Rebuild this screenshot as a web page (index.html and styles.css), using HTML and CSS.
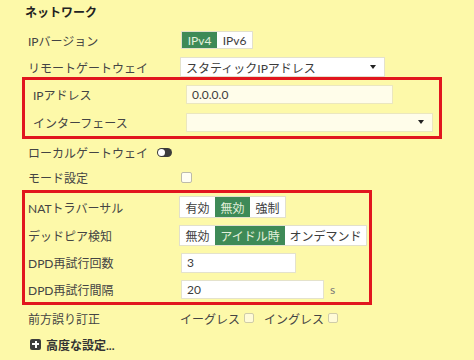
FILE: index.html
```html
<!DOCTYPE html>
<html lang="ja">
<head>
<meta charset="utf-8">
<link rel="stylesheet" href="styles.css">
</head>
<body>
<div class="panel">
  <div class="title">ネットワーク</div>

  <div class="row r28">
    <div class="label">IPバージョン</div>
    <div class="seg seg-ip"><span class="btn on">IPv4</span><span class="btn">IPv6</span></div>
  </div>

  <div class="row r-remote">
    <div class="label">リモートゲートウェイ</div>
    <div class="select sel-remote"><span>スタティックIPアドレス</span><i class="caret"></i></div>
  </div>

  <div class="box box1">
    <div class="row r28">
      <div class="label">IPアドレス</div>
      <div class="input cream in-ip">0.0.0.0</div>
    </div>
    <div class="row r28">
      <div class="label">インターフェース</div>
      <div class="select cream sel-iface"><span></span><i class="caret"></i></div>
    </div>
  </div>

  <div class="row r26">
    <span class="label-inline">ローカルゲートウェイ</span>
    <span class="switch"><span class="knob"></span></span>
  </div>

  <div class="row r25">
    <div class="label">モード設定</div>
    <span class="check"></span>
  </div>

  <div class="box box2">
    <div class="row r28">
      <div class="label">NATトラバーサル</div>
      <div class="seg seg-nat"><span class="btn">有効</span><span class="btn on">無効</span><span class="btn">強制</span></div>
    </div>
    <div class="row r28">
      <div class="label">デッドピア検知</div>
      <div class="seg seg-dpd"><span class="btn">無効</span><span class="btn on w70">アイドル時</span><span class="btn w81">オンデマンド</span></div>
    </div>
    <div class="row r27">
      <div class="label">DPD再試行回数</div>
      <div class="input in-count">3</div>
    </div>
    <div class="row r26">
      <div class="label">DPD再試行間隔</div>
      <div class="input in-interval">20</div>
      <span class="unit">s</span>
    </div>
  </div>

  <div class="row r26">
    <div class="label">前方誤り訂正</div>
    <span class="opt">イーグレス</span><span class="check small cream-check"></span>
    <span class="opt opt2">イングレス</span><span class="check small cream-check"></span>
  </div>

  <div class="row r26 adv">
    <span class="plus"></span><span class="adv-text">高度な設定...</span>
  </div>
</div>
</body>
</html>
```

FILE: styles.css
```css
* { box-sizing: border-box; }
html, body {
  margin: 0;
  padding: 0;
  background: #fdf9a9;
}
body {
  width: 474px;
  height: 360px;
  overflow: hidden;
  font-family: "Lato", "Noto Sans CJK JP", sans-serif;
  font-size: 12px;
  color: #444;
}
.panel {
  padding-left: 22px;
  display: flex;
  flex-direction: column;
}
.title {
  height: 26px;
  line-height: 26px;
  padding-left: 3px;
  font-weight: bold;
  color: #222;
}
.row {
  display: flex;
  align-items: center;
  padding-left: 6px;
}
.r28 { height: 28px; }
.r27 { height: 27px; }
.r26 { height: 26px; }
.r25 { height: 25px; }
.r-remote { height: 20px; margin-top: 3px; }
.label {
  width: 152px;
  flex: none;
  white-space: nowrap;
}

/* segmented buttons */
.seg {
  display: flex;
  border: 1px solid #e2e0cc;
  background: #fff;
}
.seg-ip { height: 18px; margin-left: 1px; }
.seg-nat { height: 22px; }
.seg-dpd { height: 21px; }
.btn {
  width: 35px;
  display: flex;
  align-items: center;
  justify-content: center;
  color: #3c3c3c;
  white-space: nowrap;
}
.btn.on {
  background: #3e8a57;
  color: #e4f1dc;
}
.w70 { width: 70px; }
.w81 { width: 81px; }

/* select / input */
.select, .input {
  display: flex;
  align-items: center;
  background: #fff;
  border: 1px solid #e4e2cc;
  padding: 0 6px 0 5px;
  color: #3c3c3c;
}
.select { justify-content: space-between; }
.cream { background: #fffdea; border-color: #ebe7bf; }
.sel-remote { width: 205px; height: 20px; }
.caret {
  width: 0;
  height: 0;
  border-left: 3.5px solid transparent;
  border-right: 3.5px solid transparent;
  border-top: 4px solid #222;
  margin-right: 2px;
}

/* box with red outline */
.box {
  border: 3px solid #e1161e;
}
.box1 { width: 420px; }
.box1 .row { padding-left: 8px; }
.box1 .label { width: 153px; }
.in-ip { width: 207px; height: 19px; }
.sel-iface { width: 247px; height: 19px; }

.box2 { width: 350px; }
.box2 .row { padding-left: 3px; }
.box2 .label { width: 151px; }
.in-count { width: 115px; height: 20px; margin-left: 2px; }
.in-interval { width: 143px; height: 19px; margin-left: 2px; }
.unit { margin-left: 6px; color: #777; font-size: 12px; }

/* toggle switch */
.label-inline { white-space: nowrap; }
.switch {
  margin-left: 9px;
  width: 15px;
  height: 9px;
  border-radius: 5px;
  background: #3b3b3b;
  position: relative;
}
.knob {
  position: absolute;
  left: 1px;
  top: 1px;
  width: 7px;
  height: 7px;
  border-radius: 50%;
  background: #fff;
}

/* checkboxes */
.check {
  width: 11px;
  height: 11px;
  border: 1px solid #bdbbaa;
  border-radius: 2px;
  background: #fffef2;
  margin-left: 1px;
}
.check.small { width: 10px; height: 10px; margin-left: 4px; }
.cream-check { background: #fffbd8; border-color: #cfcca8; }
.opt { white-space: nowrap; }
.opt2 { margin-left: 10px; }

/* advanced */
.adv { padding-left: 8px; }
.plus {
  width: 11px;
  height: 11px;
  border-radius: 2px;
  background: #3d3d3d;
  position: relative;
}
.plus::before, .plus::after {
  content: "";
  position: absolute;
  background: #fff;
}
.plus::before { left: 2px; right: 2px; top: 4.5px; height: 2px; }
.plus::after { top: 2px; bottom: 2px; left: 4.5px; width: 2px; }
.adv-text { margin-left: 5px; font-weight: bold; color: #333; }
```
